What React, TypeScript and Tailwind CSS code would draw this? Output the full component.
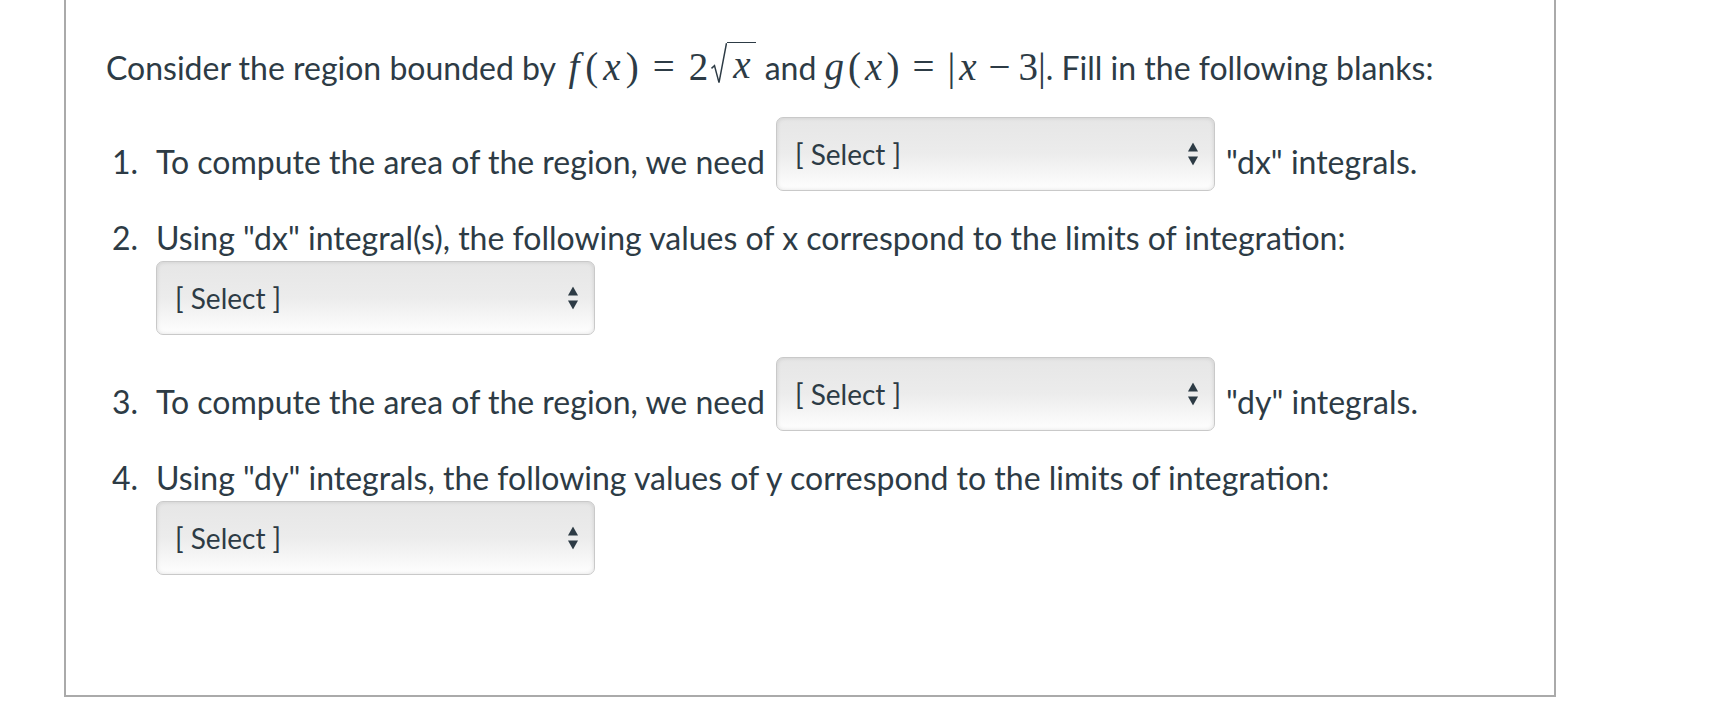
import React from "react";

const INK = "text-[#2d3b45]";

function Arrows() {
  return (
    <svg width="10" height="23" viewBox="0 0 10 23" className="absolute right-[16px] top-1/2 -translate-y-1/2" aria-hidden>
      <path d="M5 0 L10 9 L0 9 Z" fill="#2d3b45" />
      <path d="M0 14 L10 14 L5 23 Z" fill="#2d3b45" />
    </svg>
  );
}

function Select() {
  return (
    <div className="relative flex h-[74px] w-[439px] shrink-0 items-center rounded-[7px] border border-[#c9c9c9] bg-linear-to-b from-[#e6e6e6] via-[#ececec] to-[#fefefe] pl-[18px] shadow-[inset_0_0_4px_rgba(0,0,0,0.12)]">
      <span className="text-[28px] leading-none">[ Select ]</span>
      <Arrows />
    </div>
  );
}

function Sqrt({ children }: { children: React.ReactNode }) {
  return (
    <span className="inline-flex items-stretch align-[-6px]">
      <svg width="16" viewBox="0 0 16 40" preserveAspectRatio="none" className="self-stretch" aria-hidden>
        <path d="M0.5 24 L3.5 21.5 L8 37 L15.5 1" fill="none" stroke="#2d3b45" strokeWidth="1.5" />
      </svg>
      <span className="border-t-[1.5px] border-[#2d3b45] pl-[6px] pr-[6px] pt-[2px] leading-[1.05]">{children}</span>
    </span>
  );
}

const M = "font-['Liberation_Serif',serif] text-[39px] leading-none";

function Num({ n }: { n: number }) {
  return <span className="ml-[6px] w-[44px] shrink-0">{n}.</span>;
}

export default function App() {
  return (
    <div className={`min-h-screen bg-white font-['Lato',sans-serif] text-[32px] ${INK}`}>
      <div className="ml-[64px] box-border h-[697px] w-[1492px] border-x-2 border-b-2 border-[#aaaaaa] pl-[40px] pt-[42px]">
        <p className="h-[45px] leading-[45px] whitespace-nowrap">
          Consider the region bounded by{" "}
          <span className={M}>
            <i className="ml-[5px] mr-[6px]">f</i>(<i className="mx-[5px]">x</i>)<span className="mx-[14px]">=</span>
            <span className="mr-[3px]">2</span>
            <Sqrt><i>x</i></Sqrt>
          </span>{" "}
          and{" "}
          <span className={M}>
            <i className="mr-[4px]">g</i>(<i className="mx-[4px]">x</i>)<span className="mx-[13px]">=</span>|<i className="mx-[4px]">x</i>
            <span className="mx-[8px]">−</span>3|
          </span>
          . Fill in the following blanks:
        </p>

        <div className="mt-[30px] flex items-start whitespace-nowrap">
          <span className="mt-[22px] flex leading-[45px]">
            <Num n={1} />
            To compute the area of the region, we need
          </span>
          <div className="ml-[11px]">
            <Select />
          </div>
          <span className="ml-[11px] mt-[22px] leading-[45px]">"dx" integrals.</span>
        </div>

        <div className="mt-[24px] whitespace-nowrap">
          <div className="flex leading-[45px]">
            <Num n={2} />
            Using "dx" integral(s), the following values of x correspond to the limits of integration:
          </div>
          <div className="ml-[50px] mt-[1px]">
            <Select />
          </div>
        </div>

        <div className="mt-[22px] flex items-start whitespace-nowrap">
          <span className="mt-[22px] flex leading-[45px]">
            <Num n={3} />
            To compute the area of the region, we need
          </span>
          <div className="ml-[11px]">
            <Select />
          </div>
          <span className="ml-[11px] mt-[22px] leading-[45px]">"dy" integrals.</span>
        </div>

        <div className="mt-[24px] whitespace-nowrap">
          <div className="flex leading-[45px]">
            <Num n={4} />
            Using "dy" integrals, the following values of y correspond to the limits of integration:
          </div>
          <div className="ml-[50px] mt-[1px]">
            <Select />
          </div>
        </div>
      </div>
    </div>
  );
}
